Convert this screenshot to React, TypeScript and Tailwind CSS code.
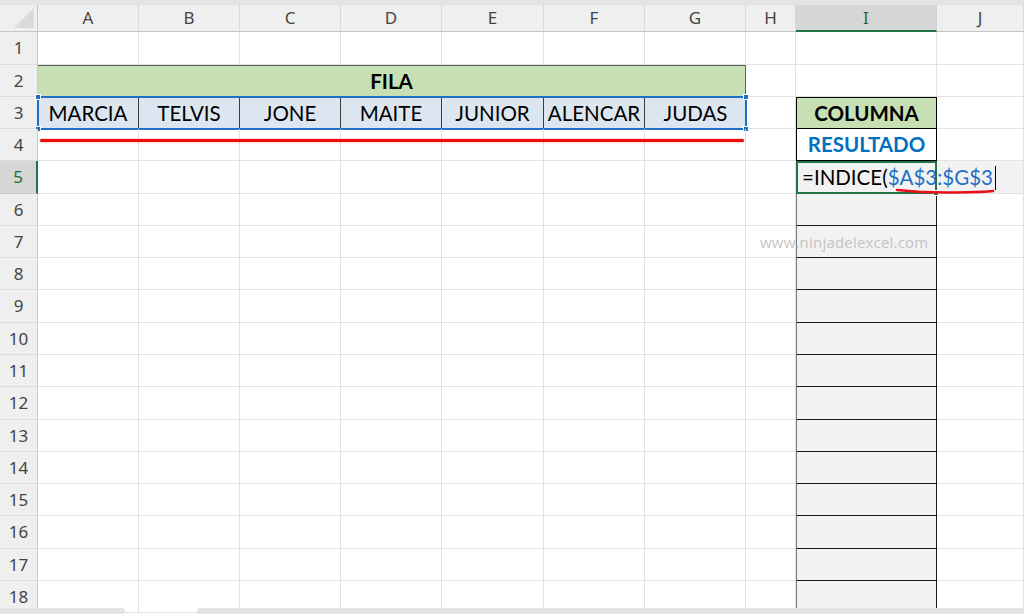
import type { ReactNode } from 'react';

const COLS = ['A', 'B', 'C', 'D', 'E', 'F', 'G', 'H', 'I', 'J'];
const COL_W = [
  'w-[101px]',
  'w-[101px]',
  'w-[101px]',
  'w-[101px]',
  'w-[102px]',
  'w-[101px]',
  'w-[101px]',
  'w-[50px]',
  'w-[141px]',
  'w-[87px]',
];
const ROW_H = [
  'h-[33px]',
  'h-[32px]',
  'h-[32px]',
  'h-[32px]',
  'h-[33px]',
  'h-[32px]',
  'h-[32px]',
  'h-[32px]',
  'h-[33px]',
  'h-[32px]',
  'h-[32px]',
  'h-[33px]',
  'h-[32px]',
  'h-[32px]',
  'h-[32px]',
  'h-[33px]',
  'h-[32px]',
  'h-[32px]',
];
const NAMES = ['MARCIA', 'TELVIS', 'JONE', 'MAITE', 'JUNIOR', 'ALENCAR', 'JUDAS'];

const cellFont = "font-['Lato','Liberation_Sans',sans-serif] text-[20.5px] text-black";
const uiFont = "font-['Noto_Sans','Open_Sans',sans-serif]";

function Corner() {
  return (
    <div className="relative h-full w-[38px] shrink-0 border-r border-b border-[#c8c8c8] bg-[#efefef]">
      <svg className="absolute right-[3px] bottom-[3px]" width="20" height="20" viewBox="0 0 20 20">
        <polygon points="20,0 20,20 0,20" fill="#dadada" />
      </svg>
    </div>
  );
}

function ColumnHeader() {
  return (
    <div className="flex h-[27px]">
      <Corner />
      {COLS.map((c, i) => {
        const active = c === 'I';
        return (
          <div
            key={c}
            className={`${COL_W[i]} ${uiFont} flex shrink-0 items-center justify-center text-[17px] ${
              active
                ? 'border-r border-b-2 border-r-[#d0d0d0] border-b-[#217346] bg-[#d6d6d6] text-[#1e6b40]'
                : 'border-r border-b border-r-[#d8d8d8] border-b-[#c4c4c4] bg-[#efefef] text-[#444]'
            }`}
          >
            {c}
          </div>
        );
      })}
    </div>
  );
}

function RowHeader({ n }: { n: number }) {
  const active = n === 5;
  return (
    <div
      className={`${uiFont} flex w-[38px] shrink-0 items-center justify-center border-b text-[17px] ${
        active
          ? 'border-r-2 border-r-[#217346] border-b-[#c8c8c8] bg-[#d6d6d6] text-[#1e6b40]'
          : 'border-r border-r-[#c8c8c8] border-b-[#dcdcdc] bg-[#efefef] text-[#444]'
      }`}
    >
      {n}
    </div>
  );
}

function Cell({ w, className = '', children }: { w: string; className?: string; children?: ReactNode }) {
  return <div className={`${w} flex shrink-0 items-center ${className}`}>{children}</div>;
}

const grid = 'border-r border-b border-[#e2e2e2]';

function Row({ n }: { n: number }) {
  const cells: ReactNode[] = [];

  if (n === 2) {
    cells.push(
      <Cell
        key="fila"
        w="w-[708px]"
        className={`${cellFont} justify-center border-t border-r border-[#5f5f5f] bg-[#c6e0b4] font-bold`}
      >
        FILA
      </Cell>,
    );
  } else if (n === 3) {
    NAMES.forEach((name, i) =>
      cells.push(
        <Cell
          key={name}
          w={COL_W[i]}
          className={`${cellFont} justify-center bg-[#dce6f1] ${i < 6 ? 'border-r border-[#3c3c3c]' : ''}`}
        >
          {name}
        </Cell>,
      ),
    );
  } else {
    for (let i = 0; i < 7; i++) cells.push(<Cell key={i} w={COL_W[i]} className={grid} />);
  }

  // H
  cells.push(<Cell key="H" w={COL_W[7]} className={grid} />);

  // I
  if (n === 3) {
    cells.push(
      <Cell key="I" w={COL_W[8]} className={`${cellFont} justify-center border border-black bg-[#c6e0b4] font-bold`}>
        COLUMNA
      </Cell>,
    );
  } else if (n === 4) {
    cells.push(
      <Cell
        key="I"
        w={COL_W[8]}
        className={`${cellFont} justify-center border-x border-b border-black bg-white font-bold`}
      >
        <span className="text-[#0070c0]">RESULTADO</span>
      </Cell>,
    );
  } else if (n === 5) {
    cells.push(
      <Cell key="I" w={COL_W[8]} className="relative z-10 border-2 border-[#217346] bg-[#f2f2f2] pl-[4px]">
        <span className="absolute right-[-4px] bottom-[-4px] h-[6px] w-[6px] border border-white bg-[#217346]" />
        <span className={`${cellFont} relative flex items-center whitespace-nowrap`}>
          =INDICE(
          <span className="relative text-[#1f6fc5]">
            $A$3:$G$3
            <svg className="absolute top-[26px] left-[6px] h-[6px] w-[96%]" viewBox="0 0 100 6" preserveAspectRatio="none">
              <path d="M3 2 Q 30 5 60 4.5 T 98 3" stroke="#e8101a" strokeWidth="2.6" fill="none" strokeLinecap="round" />
            </svg>
          </span>
          <span className="ml-[2px] h-[24px] w-px bg-black" />
        </span>
      </Cell>,
    );
  } else if (n >= 6) {
    cells.push(
      <Cell
        key="I"
        w={COL_W[8]}
        className="border-r border-b border-l border-r-[#1a1a1a] border-b-[#1a1a1a] border-l-[#7a7a7a] bg-[#f2f2f2]"
      />,
    );
  } else {
    cells.push(<Cell key="I" w={COL_W[8]} className={grid} />);
  }

  // J
  cells.push(<Cell key="J" w={COL_W[9]} className={`${grid} ${n === 5 ? 'bg-[#f2f2f2]' : ''}`} />);

  return (
    <div className={`relative flex ${ROW_H[n - 1]}`}>
      <RowHeader n={n} />
      {cells}
      {n === 3 && (
        <div className="pointer-events-none absolute top-[-1px] left-[37px] h-[34px] w-[710px] border-2 border-[#1f6fc5]">
          <span className="absolute top-[-4px] left-[-4px] h-[6px] w-[6px] border border-white bg-[#1f6fc5]" />
          <span className="absolute top-[-4px] right-[-4px] h-[6px] w-[6px] border border-white bg-[#1f6fc5]" />
          <span className="absolute bottom-[-4px] left-[-4px] h-[6px] w-[6px] border border-white bg-[#1f6fc5]" />
          <span className="absolute right-[-4px] bottom-[-4px] h-[6px] w-[6px] border border-white bg-[#1f6fc5]" />
        </div>
      )}
      {n === 4 && (
        <div className="pointer-events-none absolute top-[10px] left-[40px] h-[3px] w-[704px] rounded-full bg-[#f20d0d] shadow-[0_0_2px_rgba(255,0,0,0.5)]" />
      )}
      {n === 7 && (
        <div className="pointer-events-none absolute top-0 left-[760px] flex h-full items-center font-['Open_Sans','Noto_Sans',sans-serif] text-[15px] tracking-[0.2px] text-[#c4c4c4]">
          www.ninjadelexcel.com
        </div>
      )}
    </div>
  );
}

export default function App() {
  return (
    <div className="relative h-[614px] w-[1024px] overflow-hidden bg-white">
      <div className="h-[5px] bg-[#e4e4e4]" />
      <ColumnHeader />
      {ROW_H.map((_, i) => (
        <Row key={i} n={i + 1} />
      ))}
      <div className="absolute inset-x-0 bottom-0 flex h-[6px] gap-[72px]">
        <div className="w-[125px] rounded-r-full bg-[#e4e4e4]" />
        <div className="flex-1 rounded-l-full bg-[#e4e4e4]" />
      </div>
    </div>
  );
}
